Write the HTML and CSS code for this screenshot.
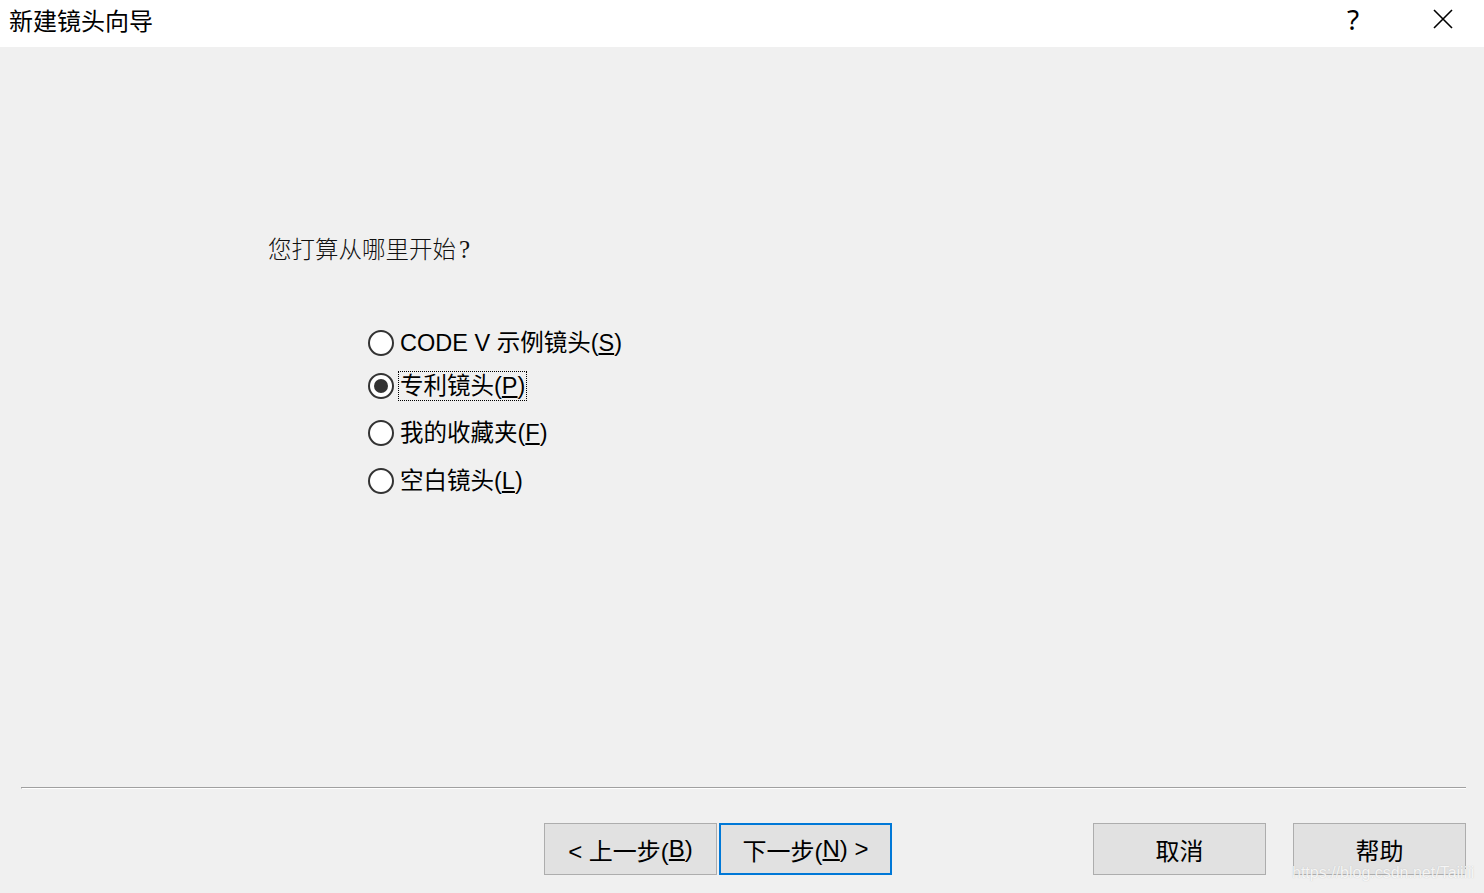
FILE: index.html
```html
<!DOCTYPE html>
<html lang="zh-CN">
<head>
<meta charset="utf-8">
<title>新建镜头向导</title>
<link rel="stylesheet" href="styles.css">
</head>
<body>
<div class="window">
  <header class="titlebar">
    <div class="title">新建镜头向导</div>
    <div class="title-controls">
      <span class="help-btn">?</span>
      <span class="close-btn">
        <svg width="20" height="20" viewBox="0 0 20 20"><path d="M1 1 L19 19 M19 1 L1 19" stroke="#000" stroke-width="1.6" fill="none"/></svg>
      </span>
    </div>
  </header>
  <main class="content">
    <div class="question">您打算从哪里开始<span class="qmark">?</span></div>
    <div class="options">
      <label class="option opt1"><span class="radio"></span><span class="label">CODE V 示例镜头(<u>S</u>)</span></label>
      <label class="option opt2"><span class="radio checked"></span><span class="label focus">专利镜头(<u>P</u>)</span></label>
      <label class="option opt3"><span class="radio"></span><span class="label">我的收藏夹(<u>F</u>)</span></label>
      <label class="option opt4"><span class="radio"></span><span class="label">空白镜头(<u>L</u>)</span></label>
    </div>
  </main>
  <div class="separator"></div>
  <footer class="buttons">
    <div class="nav-group">
      <button class="btn">&lt; 上一步(<u>B</u>)</button>
      <button class="btn default">下一步(<u>N</u>) &gt;</button>
    </div>
    <button class="btn cancel">取消</button>
    <button class="btn help">帮助</button>
  </footer>
  <div class="watermark">https://blog.csdn.net/Taiiiii</div>
</div>
</body>
</html>
```
FILE: styles.css
```css
* { box-sizing: border-box; }
html, body { margin: 0; padding: 0; }
body {
  background: #f0f0f0;
  font-family: "Liberation Sans", "Noto Sans CJK SC", sans-serif;
  color: #000;
}
.window {
  position: relative;
  width: 1484px;
  height: 893px;
  overflow: hidden;
}
.titlebar {
  height: 47px;
  background: #fff;
  display: flex;
  justify-content: space-between;
  align-items: flex-start;
  padding-left: 9px;
}
.title {
  font-family: "Noto Sans CJK SC", sans-serif;
  font-size: 24px;
  line-height: 40px;
}
.title-controls {
  display: flex;
  align-items: flex-start;
}
.help-btn {
  font-family: "Noto Sans", "Liberation Sans", sans-serif;
  font-size: 28px;
  line-height: 38px;
  width: 90px;
  padding-left: 12px;
  text-align: center;
}
.close-btn {
  width: 92px;
  height: 38px;
  display: flex;
  justify-content: center;
  align-items: center;
  padding-left: 9px;
}
.content {
  padding-top: 186px;
  padding-left: 268px;
}
.question {
  font-family: "Noto Sans CJK SC", sans-serif;
  font-weight: 300;
  font-size: 23.5px;
  line-height: 30px;
  height: 30px;
  color: #111;
}
.qmark {
  display: inline-block;
  width: 24px;
  padding-left: 3px;
  line-height: 1;
  font-size: 25px;
  font-family: "Liberation Serif", serif;
}
.options {
  margin-top: 65px;
  margin-left: 100px;
  display: flex;
  flex-direction: column;
}
.option {
  display: flex;
  align-items: center;
  height: 30px;
  font-size: 23.5px;
}
.opt1 { margin-bottom: 13px; }
.opt2 { margin-bottom: 17px; }
.opt3 { margin-bottom: 18px; }
.radio {
  width: 26px;
  height: 26px;
  border: 2px solid #333;
  border-radius: 50%;
  background: #fff;
  display: flex;
  justify-content: center;
  align-items: center;
  margin-right: 4px;
  flex: none;
}
.radio.checked::after {
  content: "";
  width: 14px;
  height: 14px;
  border-radius: 50%;
  background: #333;
}
.label {
  line-height: 28px;
  white-space: nowrap;
  padding: 0 1px;
  border: 1px solid transparent;
}
.label.focus {
  border: 1px dotted #000;
}
.label u { text-underline-offset: 2px; }
.separator {
  margin: 291px 18px 0 21px;
  height: 2px;
  border-top: 1px solid #a0a0a0;
  border-bottom: 1px solid #fff;
  border-left: 1px solid #a0a0a0;
}
.buttons {
  margin-top: 34px;
  display: flex;
  padding-left: 544px;
}
.nav-group {
  display: flex;
  gap: 2px;
  margin-right: 201px;
}
.btn {
  width: 173px;
  height: 52px;
  border: 1px solid #adadad;
  background: #e1e1e1;
  font-family: "Liberation Sans", "Noto Sans CJK SC", sans-serif;
  font-size: 24px;
  color: #000;
  padding: 0;
  display: flex;
  justify-content: center;
  align-items: center;
}
.btn.default {
  border: 2px solid #0078d7;
}
.btn.help { margin-left: 27px; }
.btn u { text-underline-offset: 2px; }
.watermark {
  position: absolute;
  left: 1292px;
  top: 864px;
  font-family: "Liberation Sans", sans-serif;
  font-size: 16px;
  color: rgba(255, 255, 255, 0.85);
  text-shadow: 0 0 1px rgba(160, 160, 160, 0.6);
  white-space: nowrap;
}
```
